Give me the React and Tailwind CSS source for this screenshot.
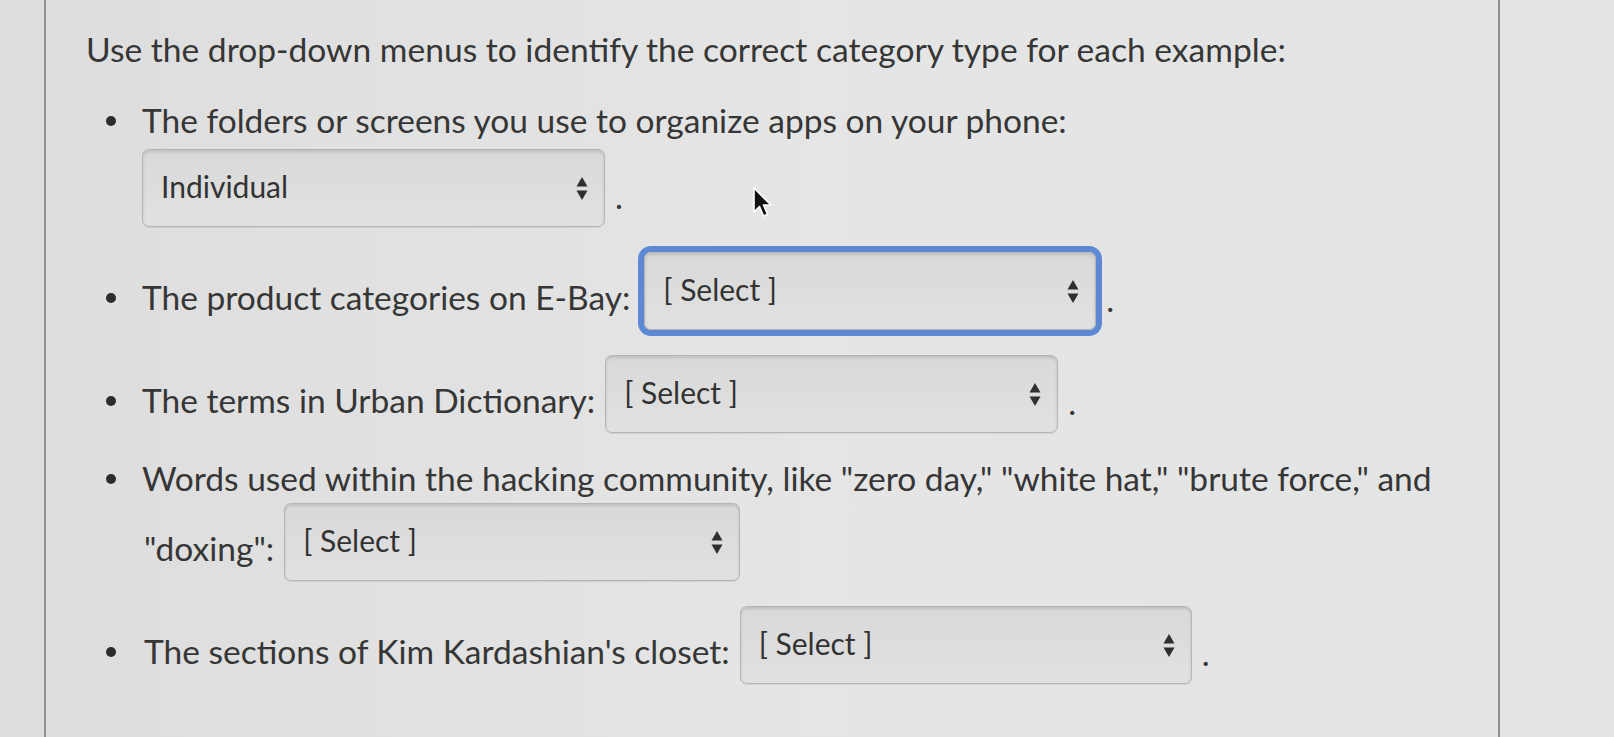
import React from "react";

function Arrows() {
  return (
    <svg width="12" height="25" viewBox="0 0 12 25" className="shrink-0">
      <path d="M6 1 L11.5 10.5 L0.5 10.5 Z" fill="#2f2f2f" />
      <path d="M0.5 14.5 L11.5 14.5 L6 24 Z" fill="#2f2f2f" />
    </svg>
  );
}

function Select({ value, width = "w-[453px]", focused = false, ml = "ml-[10px]" }) {
  return (
    <div
      className={`${ml} ${width} h-[78px] shrink-0 flex items-center justify-between rounded-[7px] border border-[#b4b5b4] bg-gradient-to-b from-[#d8d9d8] to-[#e0e1e0] pl-[18px] pr-[16px] shadow-[inset_0_2px_3px_rgba(0,0,0,0.12),0_1px_1px_rgba(0,0,0,0.08)] ${
        focused ? "ring-[6px] ring-[#5c88d4] border-[#8aa6d6]" : ""
      }`}
    >
      <span className="text-[30px] text-[#333] leading-none pb-[4px]">{value}</span>
      <Arrows />
    </div>
  );
}

function Dot({ top }) {
  return <span className={`absolute left-[-36px] ${top} w-[10px] h-[10px] rounded-full bg-[#2c2c2c]`} />;
}

function Period() {
  return <span className="ml-[10px] pt-[27px] text-[33.5px] leading-[40px]">.</span>;
}

function Cursor() {
  return (
    <svg
      className="absolute left-[752px] top-[186px]"
      width="22"
      height="34"
      viewBox="0 0 22 34"
    >
      <path
        d="M2 2 L2 26 L7.5 20.5 L11.5 30 L15.5 28.3 L11.5 19 L19 19 Z"
        fill="#111"
        stroke="#fff"
        strokeWidth="1.6"
        strokeLinejoin="round"
      />
    </svg>
  );
}

export default function App() {
  return (
    <div
      className="relative w-[1614px] h-[737px] overflow-hidden bg-gradient-to-r from-[#dcdddc] via-[#e4e5e4] to-[#e3e5e4] text-[#363636]"
      style={{ fontFamily: "Lato, 'Open Sans', sans-serif" }}
    >
      <div className="ml-[44px] w-[1456px] h-full border-l-2 border-r-2 border-[#8f908f] pl-[40px] pt-[28px]">
        <h1 className="text-[33.6px] leading-[42px]">
          Use the drop-down menus to identify the correct category type for each example:
        </h1>
        <ul className="mt-[30px] ml-[56px] flex flex-col gap-[25px] text-[33.5px]">
          <li className="relative">
            <Dot top="top-[16px]" />
            <div className="leading-[40px] whitespace-nowrap">The folders or screens you use to organize apps on your phone:</div>
            <div className="mt-[9px] flex items-start">
              <Select value="Individual" ml="ml-0" width="w-[463px]" />
              <Period />
            </div>
          </li>
          <li className="relative flex items-start">
            <Dot top="top-[41px]" />
            <span className="leading-[40px] pt-[25px] whitespace-nowrap">The product categories on E-Bay:</span>
            <Select value="[ Select ]" focused ml="ml-[14px]" width="w-[452px]" />
            <Period />
          </li>
          <li className="relative flex items-start">
            <Dot top="top-[41px]" />
            <span className="leading-[40px] pt-[25px] whitespace-nowrap">The terms in Urban Dictionary:</span>
            <Select value="[ Select ]" />
            <Period />
          </li>
          <li className="relative">
            <Dot top="top-[16px]" />
            <div className="leading-[40px] whitespace-nowrap">
              Words used within the hacking community, like "zero day," "white hat," "brute force," and
            </div>
            <div className="mt-[5px] flex items-start">
              <span className="leading-[40px] pt-[25px] whitespace-nowrap pl-[2px]">"doxing":</span>
              <Select value="[ Select ]" width="w-[456px]" />
            </div>
          </li>
          <li className="relative flex items-start">
            <Dot top="top-[41px]" />
            <span className="leading-[40px] pt-[25px] whitespace-nowrap pl-[2px]">The sections of Kim Kardashian's closet:</span>
            <Select value="[ Select ]" width="w-[452px]" />
            <Period />
          </li>
        </ul>
      </div>
      <Cursor />
    </div>
  );
}
